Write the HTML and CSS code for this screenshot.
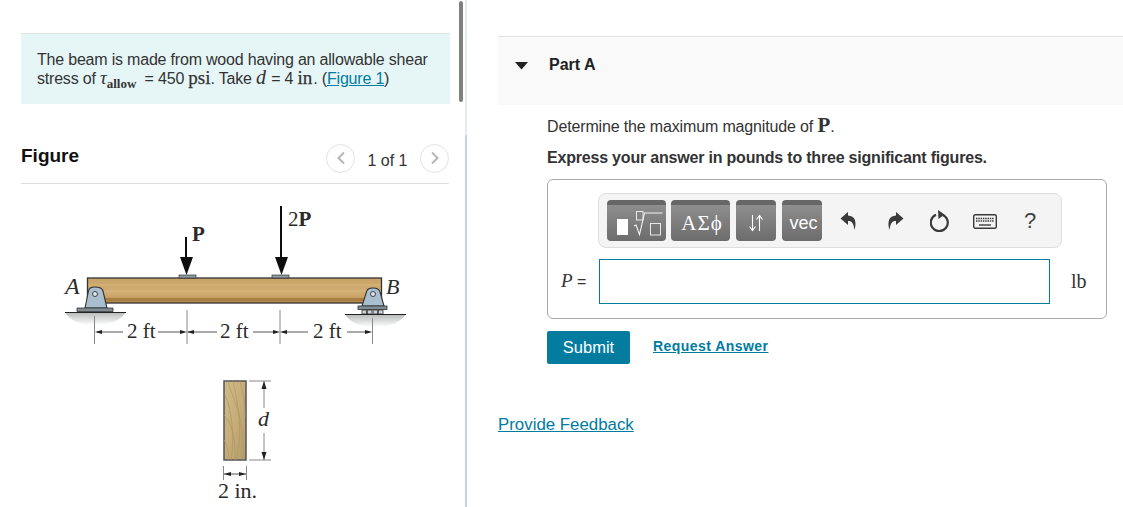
FILE: index.html
```html
<!DOCTYPE html>
<html lang="en">
<head>
<meta charset="utf-8">
<title>Part A</title>
<link rel="stylesheet" href="styles.css">
</head>
<body>
<div class="page">
  <section class="left">
    <div class="scroll-thumb"></div>
    <div class="left-inner">
      <div class="intro">The beam is made from wood having an allowable shear<br>stress of <span class="math ital tau">τ</span><sub class="math sub">allow</sub> = 450 <span class="math med">psi</span>. Take <span class="math ital dvar">d</span> = 4 <span class="math med inch">in</span>. (<a href="#">Figure 1</a>)</div>
      <div class="fig-head">
        <h2>Figure</h2>
        <div class="pager">
          <span class="circle"><svg width="10" height="14" viewBox="0 0 10 14"><path d="M8 1.500 2.500 7 8 12.500" fill="none" stroke="#b5b5b5" stroke-width="2"/></svg></span>
          <span class="count">1 of 1</span>
          <span class="circle"><svg width="10" height="14" viewBox="0 0 10 14"><path d="M2 1.500 7.500 7 2 12.500" fill="none" stroke="#b5b5b5" stroke-width="2"/></svg></span>
        </div>
      </div>
    </div>
    <svg class="figure" width="464" height="323" viewBox="0 184 464 323">
      <defs>
        <linearGradient id="wood" x1="0" y1="0" x2="0" y2="1">
          <stop offset="0" stop-color="#c8a468"/><stop offset=".6" stop-color="#d2ad72"/><stop offset="1" stop-color="#b98f52"/>
        </linearGradient>
        <linearGradient id="ground" x1="0" y1="0" x2="0" y2="1">
          <stop offset="0" stop-color="#b4b8b6"/><stop offset="1" stop-color="#ffffff"/>
        </linearGradient>
        <linearGradient id="grain" x1="0" y1="0" x2="1" y2="1">
          <stop offset="0" stop-color="#d2bb8b"/><stop offset=".5" stop-color="#c6ad7a"/><stop offset="1" stop-color="#b39b6a"/>
        </linearGradient>
        <filter id="soft"><feGaussianBlur stdDeviation="0.45"/></filter>
      </defs>
      <g filter="url(#soft)">
        <path d="M65 312h61c-6 9-16 13-31 13s-25-4-30-13z" fill="url(#ground)"/>
        <path d="M345 314h61c-6 9-16 13-31 13s-25-4-30-13z" fill="url(#ground)"/>
        <rect x="87.500" y="278" width="294" height="25" fill="url(#wood)" stroke="#333" stroke-width="1.300"/>
        <rect x="88" y="298" width="293" height="3.500" fill="#a87f42"/>
        <path d="M88 285h293M88 291h293" stroke="#dcbc85" stroke-width=".7"/>
        <rect x="179" y="275" width="17" height="3" fill="#8e9ba3" stroke="#333" stroke-width=".7"/>
        <rect x="272" y="275" width="17" height="3" fill="#8e9ba3" stroke="#333" stroke-width=".7"/>
        <path d="M186 237v22" stroke="#111" stroke-width="2"/>
        <path d="M180 257h13l-6.500 18z" fill="#111"/>
        <path d="M281 206v53" stroke="#111" stroke-width="2"/>
        <path d="M275 257h13l-6.500 18z" fill="#111"/>
        <path d="M85 308 88.500 291Q89 287 95 287Q102 287 103 291L107 308z" fill="#a9bfcf" stroke="#333" stroke-width="1.100"/>
        <circle cx="95" cy="294" r="2.500" fill="#dde4e8" stroke="#333" stroke-width=".9"/>
        <path d="M77 308h36v3.500H77z" fill="#7f8c94" stroke="#333" stroke-width=".8"/>
        <path d="M65 312.500h61" stroke="#222" stroke-width="1.200"/>
        <path d="M362 306 366.500 292Q367 288 373 288Q379 288 380 292L384 306z" fill="#a9bfcf" stroke="#333" stroke-width="1.100"/>
        <circle cx="373" cy="294" r="2.500" fill="#dde4e8" stroke="#333" stroke-width=".9"/>
        <rect x="358" y="306" width="29" height="3.500" fill="#7f8c94" stroke="#333" stroke-width=".8"/>
        <path d="M362 310h4.500v4h-4.500zM367.500 310h4.500v4h-4.500zM373 310h4.500v4H373zM378.500 310h4.500v4h-4.500z" fill="#ccd2d8" stroke="#333" stroke-width=".8"/>
        <path d="M345 314.500h61" stroke="#222" stroke-width="1.200"/>
        <path d="M94.500 316v28M187 310v34M280 310v34M372.500 318v26" stroke="#888" stroke-width="1"/>
        <path d="M97 332h26M158 332h25M188 332h29M253 332h24M282 332h26M347 332h23" stroke="#555" stroke-width="1"/>
        <path d="M95 332l7-2v4zM187 332l-7-2v4zM187 332l7-2v4zM280 332l-7-2v4zM280 332l7-2v4zM372 332l-7-2v4z" fill="#222"/>
        <rect x="224" y="381" width="22" height="79" fill="url(#grain)" stroke="#555" stroke-width="1.500"/>
        <path d="M228 381c6 24 16 30 15 79M233 381c6 30 10 50 3 79M224 415c8 8 12 24 11 45M240 381c4 14 5 24 5 36M225 395c6 12 10 40 6 65M224 440c4 6 5 14 4 20" stroke="#b0965f" stroke-width=".7" fill="none"/>
        <path d="M249 381h22M249 460h22M264 381v27M264 433v27" stroke="#888" stroke-width="1"/>
        <path d="M264 381l-2.500 8h5zM264 460l-2.500-8h5z" fill="#222"/>
        <path d="M223.500 466v14M246.500 466v14" stroke="#888" stroke-width="1"/>
        <path d="M224 474h22" stroke="#555" stroke-width="1"/>
        <path d="M224 474l7-2v4zM246 474l-7-2v4z" fill="#222"/>
      </g>
      <g class="fig-text">
        <text x="65" y="294" class="fi fa">A</text>
        <text x="386" y="294" class="fi fl">B</text>
        <text x="192" y="241" class="fb">P</text>
        <text x="288" y="226">2<tspan class="fb">P</tspan></text>
        <text x="127" y="338">2 ft</text>
        <text x="220" y="338">2 ft</text>
        <text x="313" y="338">2 ft</text>
        <text x="258" y="426" class="fi fl">d</text>
        <text x="218" y="498" class="fl">2 in.</text>
      </g>
    </svg>
  </section>

  <main class="right">
    <header class="part-head">
      <svg class="caret" width="14" height="8" viewBox="0 0 14 8"><path d="M0 0h13L6.500 7.500z" fill="#222"/></svg>
      <h3>Part A</h3>
    </header>
    <div class="part-body">
      <p class="q">Determine the maximum magnitude of <span class="math bold-p">P</span>.</p>
      <p class="express">Express your answer in pounds to three significant figures.</p>
      <div class="answer">
        <div class="toolbar">
          <div class="tb-group">
            <span class="tbtn wide templates">
              <svg width="59" height="36" viewBox="607 205 59 36">
                <rect x="617" y="219" width="11" height="16" fill="#fff"/>
                <rect x="636.500" y="211.500" width="6.500" height="8.500" fill="none" stroke="#e8e8e8" stroke-width="1"/>
                <path d="M634 226l2-1 3.500 9.500 5-21.500h18" fill="none" stroke="#f2f2f2" stroke-width="1.100"/>
                <rect x="650.500" y="223.500" width="10" height="11.500" fill="none" stroke="#e8e8e8" stroke-width="1"/>
              </svg>
            </span>
            <span class="tbtn wide greek">ΑΣϕ</span>
            <span class="tbtn narrow">
              <svg width="16" height="18" viewBox="0 0 16 18"><path d="M4.500 1v15M1.500 12.500l3 4 3-4M11.500 17V2M8.500 5.500l3-4 3 4" fill="none" stroke="#fff" stroke-width="1.100"/></svg>
            </span>
            <span class="tbtn narrow vec">vec</span>
          </div>
          <div class="tb-tools">
            <svg class="tool undo" width="18" height="20" viewBox="0 0 18 20"><path d="M8 1 .5 7.500 8 14v-4c3.500 0 5.500 1.500 6.500 9C17 11 15 4.800 8 4.500z" fill="#3a3a3a"/></svg>
            <svg class="tool redo" width="18" height="20" viewBox="0 0 18 20"><path d="M10 1l7.500 6.500L10 14v-4c-3.500 0-5.500 1.500-6.500 9C1 11 3 4.800 10 4.500z" fill="#3a3a3a"/></svg>
            <svg class="tool reset" width="20" height="22" viewBox="0 0 20 22"><path d="M13 5A8.500 8.500 0 1 1 6 4.800" fill="none" stroke="#3a3a3a" stroke-width="2.200"/><path d="M8 0l6.500 4.500L8.500 9z" fill="#3a3a3a"/></svg>
            <svg class="tool kbd" width="24" height="15" viewBox="0 0 24 15"><rect x=".7" y=".7" width="22.600" height="13.600" rx="1.500" fill="#f4f4f4" stroke="#3a3a3a" stroke-width="1.400"/><path d="M3 4.500h18M3 7h18" stroke="#3a3a3a" stroke-width="1.300" stroke-dasharray="1.500 .8"/><path d="M6 11h12" stroke="#3a3a3a" stroke-width="1.400"/></svg>
            <span class="tool help">?</span>
          </div>
        </div>
        <div class="input-row">
          <span class="label"><span class="math ital p-var">P</span> =</span>
          <div class="input"></div>
          <span class="unit">lb</span>
        </div>
      </div>
      <div class="actions">
        <button class="submit" type="button">Submit</button>
        <a class="request" href="#">Request Answer</a>
      </div>
    </div>
    <a class="feedback" href="#">Provide Feedback</a>
  </main>
</div>
</body>
</html>
```

FILE: styles.css
```css
* { box-sizing: border-box; }
html, body { margin: 0; height: 100%; overflow: hidden; background: #fff; }
body { font-family: "Liberation Sans", Arial, sans-serif; font-size: 16px; color: #333; }
a { color: #007c9f; text-decoration: underline; }
.page { display: flex; height: 507px; }
.left { position: relative; width: 467px; flex: none; border-right: 2px solid #c4d4e4; }
.left::before { content: ""; position: absolute; top: 0; right: -2px; width: 2px; height: 135px; background: #e3eaf2; }
.scroll-thumb { position: absolute; left: 459px; top: 1px; width: 4px; height: 101px; background: #808080; border-radius: 2px; }
.left-inner { padding: 33px 15px 0 21px; height: 184px; }
.intro { height: 71px; padding: 16px 0 0 16px; background: #e6f6f7; border-top: 1px solid #dfe3e3; line-height: 19px; letter-spacing: -.2px; white-space: nowrap; }
.math { font-family: "Liberation Serif", "Times New Roman", serif; line-height: 0; letter-spacing: 0; }
.ital { font-style: italic; }
.tau { font-size: 19px; }
.sub { font-size: 13px; font-weight: 700; vertical-align: -4px; margin-right: 4px; }
.med { font-size: 19px; -webkit-text-stroke: .25px #333; }
.inch { margin-right: 1px; }
.dvar { font-size: 20px; margin-right: 1px; }
.fig-head { display: flex; align-items: center; justify-content: space-between; height: 48px; margin-top: 32px; border-bottom: 1px solid #dcdcdc; padding: 0 0 7px; width: 428px; }
.fig-head h2 { margin: 0; font-size: 19px; line-height: 22px; font-weight: 700; color: #111; }
.pager { display: flex; align-items: center; margin-top: 4px; }
.circle { display: flex; align-items: center; justify-content: center; width: 29px; height: 29px; border: 1px solid #e2e2e2; border-radius: 50%; }
.count { width: 65px; text-align: center; line-height: 20px; color: #333; margin-top: 6px; }
.figure { display: block; }
.fig-text text { font-family: "Liberation Serif", "Times New Roman", serif; font-size: 21px; fill: #2a2a2a; }
.fig-text .fi { font-style: italic; }
.fig-text .fb { font-weight: 700; }
.fig-text .fa { font-size: 24px; }
.fig-text .fl { font-size: 22px; }
.right { flex: 1; padding: 36px 0 0 31px; min-width: 0; }
.part-head { display: flex; height: 69px; padding: 18px 0 0 17px; background: #f9f9f9; border-top: 1px solid #e1e1e1; }
.caret { margin: 7px 20px 0 0; flex: none; }
.part-head h3 { margin: 0; font-size: 16px; line-height: 19px; font-weight: 700; color: #222; }
.part-body { padding: 0 16px 0 49px; }
.q { margin: 12px 0 0; line-height: 19px; height: 19px; letter-spacing: -.15px; }
.bold-p { font-size: 21px; font-weight: 700; }
.express { margin: 12px 0 0; line-height: 19px; font-weight: 700; letter-spacing: -.2px; }
.answer { height: 140px; margin-top: 12px; padding: 13px 0 0; border: 1px solid #aaa; border-radius: 6px; }
.toolbar { display: flex; align-items: center; width: 464px; height: 55px; margin-left: 50px; padding-left: 8px; background: #f4f4f4; border: 1px solid #ddd; border-radius: 8px; }
.tb-group { display: flex; gap: 5px; }
.tbtn { display: flex; align-items: center; justify-content: center; height: 41px; padding-top: 5px; border-radius: 4px; color: #fff; background: linear-gradient(#666 0 5px, #8e8e8e 5px, #6c6c6c); }
.wide { width: 59px; }
.narrow { width: 40px; margin-left: 1px; }
.templates svg { display: block; }
.greek { padding-left: 3px; font-family: "Liberation Serif", "DejaVu Serif", serif; font-size: 21px; letter-spacing: 1px; }
.vec { padding-left: 3px; font-size: 18px; }
.tb-tools { display: flex; align-items: center; margin-left: 18px; }
.tool { flex: none; display: block; }
.redo { margin-left: 28px; }
.reset { margin-left: 26px; }
.kbd { margin: 2px 0 0 23px; }
.help { margin-left: 27px; font-size: 22px; line-height: 22px; color: #444; }
.input-row { display: flex; align-items: center; height: 45px; margin-top: 11px; }
.label { width: 51px; padding-left: 13px; font-size: 16px; white-space: nowrap; }
.p-var { font-size: 19px; }
.input { width: 451px; height: 45px; border: 1px solid #007c9f; background: #fff; }
.unit { margin-left: 21px; font-family: "Liberation Serif", serif; font-size: 20px; }
.actions { display: flex; align-items: center; margin-top: 12px; }
.submit { width: 83px; height: 33px; padding: 0; border: 0; border-radius: 2px; background: #037ca0; color: #fff; font: 16.500px "Liberation Sans", Arial, sans-serif; }
.request { margin: -3px 0 0 23px; font-size: 14px; font-weight: 700; letter-spacing: .45px; }
.feedback { display: inline-block; margin-top: 51px; line-height: 20px; font-size: 16.850px; }
```
